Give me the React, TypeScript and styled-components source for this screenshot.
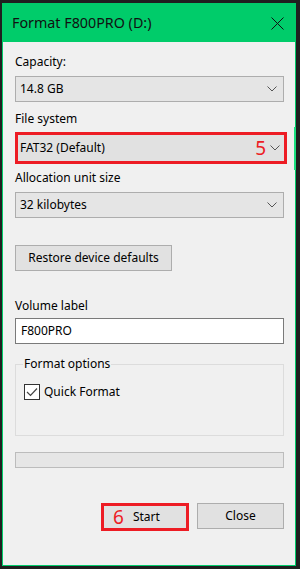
import React from "react";
import styled, { createGlobalStyle } from "styled-components";

const Global = createGlobalStyle`
  html, body { margin: 0; padding: 0; background: #1f1f1f; }
  body { font-family: "Segoe UI", "Noto Sans", "Liberation Sans", sans-serif; }
  #root { width: 300px; height: 569px; overflow: hidden; }
`;

const Window = styled.div`
  box-sizing: border-box;
  margin: 3px 0 0 2px;
  width: 294px;
  height: 563px;
  border: 1px solid #00cc6a;
  background: #f0f0f0;
  display: flex;
  flex-direction: column;
  position: relative;
`;

const Accent = styled.div`
  position: absolute;
  right: -1px;
  top: 123px;
  width: 2px;
  height: 43px;
  background: #19e07f;
`;

const TitleBar = styled.div`
  height: 37px;
  background: #00cc6a;
  display: flex;
  align-items: center;
  justify-content: space-between;
  padding: 0 11px 1px 9px;
`;

const Title = styled.div`
  font-size: 14.3px;
  color: #111;
  line-height: 20px;
`;

const CloseX = styled.svg`
  width: 13px;
  height: 13px;
  margin-top: 2px;
`;

const Body = styled.div`
  display: flex;
  flex-direction: column;
  padding: 12px 11px 0 12px;
  font-size: 12px;
  color: #000;
`;

const Label = styled.div<{ $mt?: number }>`
  height: 16px;
  line-height: 16px;
  margin-top: ${(p) => p.$mt ?? 0}px;
  white-space: nowrap;
`;

const Combo = styled.div<{ $mt?: number }>`
  box-sizing: border-box;
  height: 26px;
  margin-top: ${(p) => p.$mt ?? 0}px;
  background: #e5e5e5;
  border: 1px solid #adadad;
  display: flex;
  align-items: center;
  padding: 0 6px 0 4px;
  line-height: 16px;
`;

const ComboText = styled.span`
  flex: 1;
  white-space: nowrap;
`;

const Chevron = () => (
  <svg width="10" height="6" viewBox="0 0 10 6">
    <polyline points="0.5,0.5 5,5 9.5,0.5" fill="none" stroke="#555" strokeWidth="1" />
  </svg>
);

const RedBox = styled.div<{ $mt?: number; $mr?: number }>`
  box-sizing: border-box;
  border: 3px solid #ed1c24;
  margin-top: ${(p) => p.$mt ?? 0}px;
  margin-right: ${(p) => p.$mr ?? 0}px;
  display: flex;
  flex-direction: column;
`;

const InnerCombo = styled(Combo)`
  border: none;
  background: #e1e1e1;
  padding: 0 4px 0 2px;
`;

const Mark = styled.span`
  color: #ed1c24;
  font-size: 19px;
  line-height: 20px;
  margin-right: 4px;
`;

const Button = styled.div<{ $mt?: number; $w: number }>`
  box-sizing: border-box;
  width: ${(p) => p.$w}px;
  height: 26px;
  margin-top: ${(p) => p.$mt ?? 0}px;
  background: #e1e1e1;
  border: 1px solid #adadad;
  display: flex;
  align-items: center;
  justify-content: center;
  line-height: 16px;
  white-space: nowrap;
`;

const TextInput = styled.div<{ $mt?: number }>`
  box-sizing: border-box;
  height: 26px;
  margin-top: ${(p) => p.$mt ?? 0}px;
  background: #fff;
  border: 1px solid #7a7a7a;
  display: flex;
  align-items: center;
  padding: 0 5px;
  line-height: 16px;
`;

const Group = styled.fieldset<{ $mt?: number }>`
  margin: ${(p) => p.$mt ?? 0}px 0 0 0;
  padding: 12px 0 35px 8px;
  border: 1px solid #dcdcdc;
  min-width: 0;
`;

const Legend = styled.legend`
  padding: 0 1px;
  margin-left: -1px;
  line-height: 16px;
  font-size: 12px;
`;

const CheckRow = styled.div`
  display: flex;
  align-items: center;
  height: 16px;
  gap: 4px;
  line-height: 16px;
`;

const Box = styled.div`
  box-sizing: border-box;
  width: 16px;
  height: 16px;
  border: 1px solid #333;
  background: #fff;
  display: flex;
  align-items: center;
  justify-content: center;
`;

const Progress = styled.div<{ $mt?: number }>`
  box-sizing: border-box;
  height: 16px;
  margin-top: ${(p) => p.$mt ?? 0}px;
  background: #e6e6e6;
  border: 1px solid #bcbcbc;
`;

const Footer = styled.div<{ $mt?: number }>`
  display: flex;
  justify-content: flex-end;
  align-items: flex-start;
  gap: 8px;
  margin-top: ${(p) => p.$mt ?? 0}px;
`;

const StartBox = styled.div`
  box-sizing: border-box;
  width: 88px;
  height: 28px;
  border: 3px solid #ed1c24;
  background: #e1e1e1;
  display: flex;
  align-items: center;
  padding-left: 9px;
  line-height: 16px;
`;

const StartMark = styled(Mark)`
  margin-right: 9px;
  margin-top: -1px;
`;

export default function App() {
  return (
    <>
      <Global />
      <Window>
        <Accent />
        <TitleBar>
          <Title>Format F800PRO (D:)</Title>
          <CloseX viewBox="0 0 13 13">
            <path d="M0.5 0.5 L12.5 12.5 M12.5 0.5 L0.5 12.5" stroke="#111" strokeWidth="1" fill="none" />
          </CloseX>
        </TitleBar>
        <Body>
          <Label>Capacity:</Label>
          <Combo $mt={6}>
            <ComboText>14.8 GB</ComboText>
            <Chevron />
          </Combo>
          <Label $mt={9}>File system</Label>
          <RedBox $mt={5} $mr={-3}>
            <InnerCombo>
              <ComboText>FAT32 (Default)</ComboText>
              <Mark>5</Mark>
              <Chevron />
            </InnerCombo>
          </RedBox>
          <Label $mt={6}>Allocation unit size</Label>
          <Combo $mt={6}>
            <ComboText>32 kilobytes</ComboText>
            <Chevron />
          </Combo>
          <Button $mt={27} $w={157}>Restore device defaults</Button>
          <Label $mt={27}>Volume label</Label>
          <TextInput $mt={4}>F800PRO</TextInput>
          <Group $mt={12}>
            <Legend>Format options</Legend>
            <CheckRow>
              <Box>
                <svg width="12" height="10" viewBox="0 0 12 10">
                  <polyline points="1,5 4.5,8.5 11,1.5" fill="none" stroke="#444" strokeWidth="1.2" />
                </svg>
              </Box>
              <span>Quick Format</span>
            </CheckRow>
          </Group>
          <Progress $mt={16} />
          <Footer $mt={35}>
            <StartBox>
              <StartMark>6</StartMark>
              <span>Start</span>
            </StartBox>
            <Button $w={87}>Close</Button>
          </Footer>
        </Body>
      </Window>
    </>
  );
}
